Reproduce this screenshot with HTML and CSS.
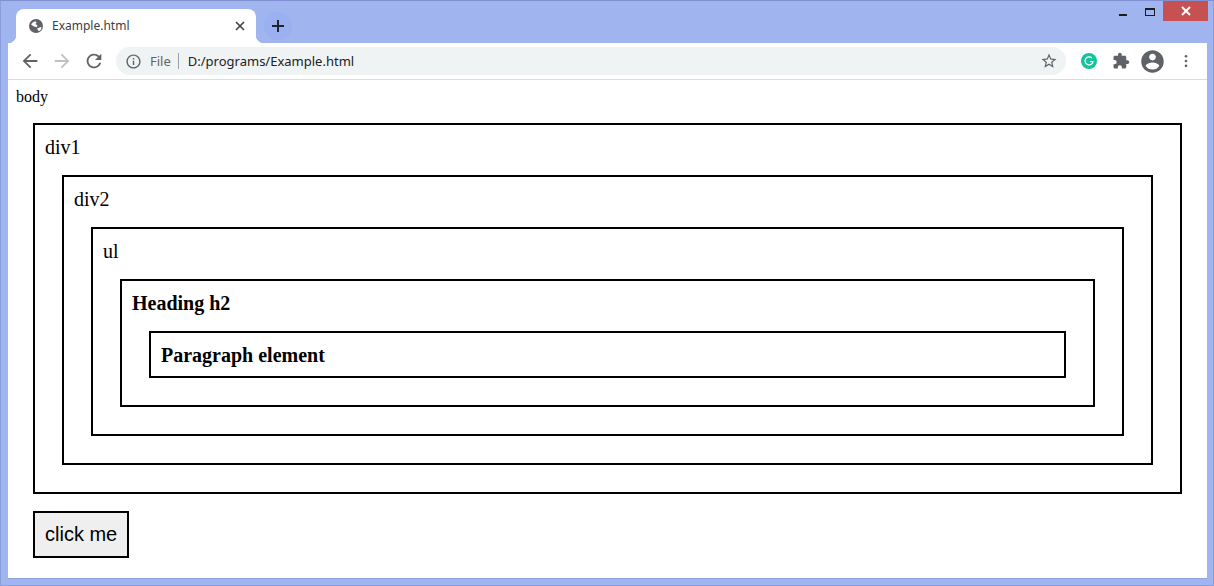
FILE: index.html
```html
<!DOCTYPE html>
<html lang="en">
<head>
    <meta charset="UTF-8">
    <title>Example.html</title>
    <link rel="stylesheet" href="styles.css">
</head>
<body>
    <div class="window">
        <!-- Tab strip -->
        <div class="tabstrip">
            <div class="tab">
                <svg class="tab-icon" viewBox="0 0 14 14"><circle cx="7" cy="7" r="7" fill="#5f6368"/><path d="M2 5.2C3.5 3.6 4.5 2.6 6.2 2.2L7.6 3.6 6.4 5 8.6 6.4 7.6 8.2 5 7.4 3.4 6.6z" fill="#fff"/><path d="M8.2 9.4L10.6 8.4 12.4 7.8 12 10.2 10.4 12 9 11.6z" fill="#fff"/></svg>
                <span class="tab-title">Example.html</span>
                <svg class="tab-close" viewBox="0 0 10 10"><path d="M1 1l8 8M9 1l-8 8"/></svg>
            </div>
            <div class="new-tab">
                <svg viewBox="0 0 14 14"><path d="M7 1v12M1 7h12"/></svg>
            </div>
            <div class="win-controls">
                <div class="win-btn"><span class="win-min"></span></div>
                <div class="win-btn"><span class="win-max"></span></div>
                <div class="win-btn win-close">
                    <svg viewBox="0 0 10 10"><path d="M1 1l8 8M9 1l-8 8"/></svg>
                </div>
            </div>
        </div>

        <div class="browser">
            <!-- Toolbar -->
            <div class="toolbar">
                <svg class="nav-icon" viewBox="0 0 24 24"><path d="M20 11H7.83l5.59-5.59L12 4l-8 8 8 8 1.41-1.41L7.83 13H20v-2z"/></svg>
                <svg class="nav-icon nav-off" viewBox="0 0 24 24"><path d="M4 11h12.17l-5.59-5.59L12 4l8 8-8 8-1.41-1.41L16.17 13H4v-2z"/></svg>
                <svg class="nav-icon" viewBox="0 0 24 24"><path d="M17.65 6.35A7.958 7.958 0 0 0 12 4c-4.42 0-7.99 3.58-7.99 8s3.57 8 7.99 8c3.73 0 6.84-2.55 7.73-6h-2.08A5.99 5.99 0 0 1 12 18c-3.31 0-6-2.69-6-6s2.69-6 6-6c1.66 0 3.14.69 4.22 1.78L13 11h7V4l-2.35 2.35z"/></svg>
                <div class="omnibox">
                    <svg class="omni-icon" viewBox="0 0 24 24"><path d="M11 7h2v2h-2zm0 4h2v6h-2zm1-9C6.48 2 2 6.48 2 12s4.48 10 10 10 10-4.48 10-10S17.52 2 12 2zm0 18c-4.41 0-8-3.59-8-8s3.59-8 8-8 8 3.59 8 8-3.59 8-8 8z"/></svg>
                    <span class="omni-file">File</span>
                    <span class="omni-sep"></span>
                    <span class="omni-url">D:/programs/Example.html</span>
                    <svg class="omni-star" viewBox="0 0 24 24"><path d="M22 9.24l-7.19-.62L12 2 9.19 8.63 2 9.24l5.46 4.73L5.82 21 12 17.27 18.18 21l-1.63-7.03L22 9.24zM12 15.4l-3.76 2.27 1-4.28-3.32-2.88 4.38-.38L12 6.1l1.71 4.04 4.38.38-3.32 2.88 1 4.28L12 15.4z"/></svg>
                </div>
                <svg class="ext-grammarly" viewBox="0 0 16 16"><circle cx="8" cy="8" r="8" fill="#15c39a"/><path d="M11 5.2A4 4 0 1 0 12 8.6H9" fill="none" stroke="#fff" stroke-width="1.2"/></svg>
                <svg class="ext-puzzle" viewBox="0 0 24 24"><path d="M20.5 11H19V7c0-1.1-.9-2-2-2h-4V3.5C13 2.12 11.88 1 10.5 1S8 2.12 8 3.5V5H4c-1.1 0-1.99.9-1.99 2v3.8H3.5c1.49 0 2.7 1.21 2.7 2.7s-1.21 2.7-2.7 2.7H2V20c0 1.1.9 2 2 2h3.8v-1.5c0-1.49 1.21-2.7 2.7-2.7 1.49 0 2.7 1.21 2.7 2.7V22H17c1.1 0 2-.9 2-2v-4h1.5c1.38 0 2.5-1.12 2.5-2.5S21.88 11 20.5 11z"/></svg>
                <svg class="ext-avatar" viewBox="0 0 24 24"><path d="M12 2C6.48 2 2 6.48 2 12s4.48 10 10 10 10-4.48 10-10S17.52 2 12 2zm0 3c1.66 0 3 1.34 3 3s-1.34 3-3 3-3-1.34-3-3 1.34-3 3-3zm0 14.2c-2.5 0-4.71-1.28-6-3.22.03-1.99 4-3.08 6-3.08 1.99 0 5.97 1.09 6 3.08-1.29 1.94-3.5 3.22-6 3.22z"/></svg>
                <svg class="ext-menu" viewBox="0 0 4 16"><circle cx="2" cy="2.5" r="1.5"/><circle cx="2" cy="8" r="1.5"/><circle cx="2" cy="13.5" r="1.5"/></svg>
            </div>

            <!-- Page content -->
            <div class="page">
                body
                <div class="box">div1
                    <div class="box">div2
                        <div class="box">ul
                            <div class="box box-bold">Heading h2
                                <div class="box box-bold">Paragraph element</div>
                            </div>
                        </div>
                    </div>
                </div>
                <button class="click-btn">click me</button>
            </div>
        </div>
    </div>
</body>
</html>
```

FILE: styles.css
```css
body {
    margin: 0;
}

.window {
    width: 1214px;
    height: 586px;
    box-sizing: border-box;
    background: #a0b4f0;
    border: 1px solid #8a9cdc;
    border-top-color: #7f8fcf;
    display: flex;
    flex-direction: column;
    overflow: hidden;
}

/* Tab strip */
.tabstrip {
    height: 42px;
    flex: none;
    display: flex;
    align-items: flex-end;
    padding-left: 15px;
}

.tab {
    position: relative;
    width: 240px;
    height: 34px;
    box-sizing: border-box;
    background: #fff;
    border-radius: 8px 8px 0 0;
    display: flex;
    align-items: center;
    padding: 0 11px 0 13px;
}

.tab::before,
.tab::after {
    content: "";
    position: absolute;
    bottom: 0;
    width: 8px;
    height: 8px;
}

.tab::before {
    left: -8px;
    background: radial-gradient(circle at 0 0, transparent 8px, #fff 8.5px);
}

.tab::after {
    right: -8px;
    background: radial-gradient(circle at 100% 0, transparent 8px, #fff 8.5px);
}

.tab-icon {
    width: 14px;
    height: 14px;
}

.tab-title {
    font-family: "Noto Sans", sans-serif;
    font-size: 12px;
    color: #3c4043;
    margin: 0 0 2px 9px;
    flex: 1;
}

.tab-close {
    width: 10px;
    height: 10px;
    fill: none;
    stroke: #3c4043;
    stroke-width: 1.6;
}

.new-tab {
    width: 28px;
    height: 28px;
    margin: 0 0 3px 8px;
    border-radius: 50%;
    background: #9ab0f0;
    display: flex;
    align-items: center;
    justify-content: center;
}

.new-tab svg {
    width: 14px;
    height: 14px;
    fill: none;
    stroke: #1f2430;
    stroke-width: 2;
}

.win-controls {
    display: flex;
    align-self: flex-start;
    margin-left: auto;
    margin-right: 5px;
}

.win-btn {
    width: 27px;
    height: 20px;
    display: flex;
    align-items: center;
    justify-content: center;
}

.win-min {
    width: 8px;
    height: 2px;
    margin-top: 8px;
    background: #1c1c1c;
}

.win-max {
    width: 10px;
    height: 8px;
    box-sizing: border-box;
    margin-top: 2px;
    border: 1px solid #1c1c1c;
    border-top-width: 2px;
}

.win-close {
    width: 45px;
    background: #c75050;
}

.win-close svg {
    width: 10px;
    height: 10px;
    fill: none;
    stroke: #fff;
    stroke-width: 2;
}

/* Browser area */
.browser {
    flex: none;
    height: 535px;
    margin: 0 6px 0 7px;
    background: #fff;
    box-shadow: 0 1px 0 #8ea2e0;
}

.toolbar {
    height: 36px;
    border-bottom: 1px solid #dadce0;
    display: flex;
    align-items: center;
    padding-left: 11px;
}

.nav-icon {
    width: 22px;
    height: 22px;
    fill: #5f6368;
    margin-right: 10px;
}

.nav-off {
    fill: #bdc1c6;
}

.omnibox {
    width: 950px;
    height: 28px;
    margin-left: 1px;
    border-radius: 14px;
    background: #f0f3f4;
    display: flex;
    align-items: center;
    padding: 0 8px 0 9px;
    box-sizing: border-box;
    font-family: "Noto Sans", sans-serif;
    font-size: 13px;
}

.omni-icon {
    width: 17px;
    height: 17px;
    fill: #5f6368;
}

.omni-file {
    color: #5f6368;
    margin-left: 8px;
}

.omni-sep {
    width: 1px;
    height: 16px;
    background: #9aa0a6;
    margin: 0 9px 0 7px;
}

.omni-url {
    color: #202124;
    flex: 1;
}

.omni-star {
    width: 18px;
    height: 18px;
    fill: #5f6368;
}

.ext-grammarly {
    width: 16px;
    height: 16px;
    margin-left: 15px;
}

.ext-puzzle {
    width: 18px;
    height: 18px;
    fill: #5f6368;
    margin-left: 15px;
}

.ext-avatar {
    width: 27px;
    height: 27px;
    fill: #5f6368;
    margin-left: 9px;
}

.ext-menu {
    width: 4px;
    height: 14px;
    fill: #5f6368;
    margin-left: 18px;
}

/* Page content */
.page {
    padding: 8px;
    font-family: "Liberation Serif", serif;
    font-size: 16px;
    color: #000;
}

.box {
    margin: 16px 17px 18px;
    padding: 11px 10px 9px;
    border: 2px solid #000;
    font-size: 20px;
}

.page > .box {
    margin: 17px;
}

.box-bold {
    font-weight: bold;
}

.click-btn {
    display: block;
    margin: 0 17px;
    padding: 10px;
    border: 2px solid #000;
    background: #efefef;
    font-family: "Liberation Sans", sans-serif;
    font-size: 20px;
    color: #000;
}
```
